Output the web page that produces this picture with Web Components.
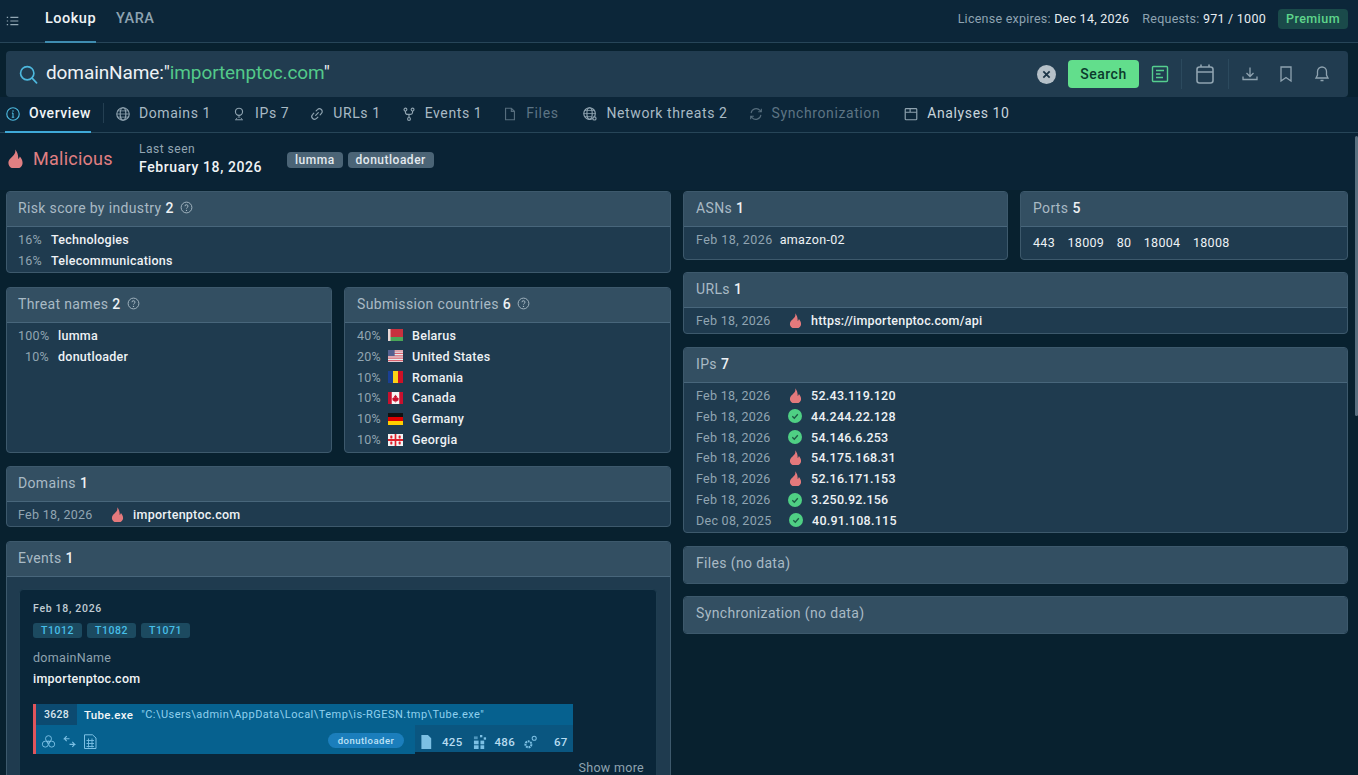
<!DOCTYPE html>
<html lang="en">
<head>
<meta charset="utf-8">
<title>Lookup</title>
<style>
html,body{margin:0;padding:0;height:775px;overflow:hidden;background:#08212f}
body{font-family:Roboto,"Liberation Sans",sans-serif;color:#e8eef2;font-size:13px}
</style>
</head>
<body>
<app-page></app-page>
<script>
const ICONS={
 list:'<path d="M6 5h9M6 9h9M6 13h9M2 5h1.500M2 9h1.500M2 13h1.500" stroke-width="1.300"/>',
 search:'<circle cx="8.300" cy="8.300" r="6"/><path d="M12.700 12.700l4 4.300" stroke-linecap="round"/>',
 info:'<circle cx="9" cy="9" r="7"/><path d="M9 8v4.500M7.600 12.700h2.800M7.800 8h1.200" stroke-width="1.200"/><circle cx="9" cy="5.600" r=".9" fill="currentColor" stroke="none"/>',
 globe:'<circle cx="9" cy="9" r="7"/><ellipse cx="9" cy="9" rx="3.200" ry="7"/><path d="M2 9h14M3 5.500h12M3 12.500h12" stroke-width=".9"/>',
 pin:'<circle cx="9" cy="6.500" r="4"/><path d="M9 10.500v3M5 15.500h8M7 13.500l-2 2M11 13.500l2 2" stroke-width="1.100"/>',
 link:'<path d="M7.500 10.500l3-3M8 5.500l1.500-1.500a3 3 0 014.500 4.300L12.500 10M10 12.500L8.500 14A3 3 0 014 9.700L5.500 8" stroke-linecap="round"/>',
 fork:'<circle cx="5" cy="4" r="1.600"/><circle cx="13" cy="4" r="1.600"/><circle cx="9" cy="14.500" r="1.600"/><path d="M5 5.600V7a2.500 2.500 0 002.500 2.500h3A2.500 2.500 0 0013 7V5.600M9 9.500v3.400"/>',
 file:'<path d="M4 2.500h6.500L14 6v9.500H4zM10.500 2.500V6H14"/>',
 threat:'<circle cx="8.500" cy="8.500" r="6.500"/><ellipse cx="8.500" cy="8.500" rx="3" ry="6.500"/><path d="M2 8.500h13M3 5h11M3 12h8" stroke-width=".9"/><circle cx="14" cy="14" r="1.800" fill="#0c2639"/>',
 sync:'<path d="M3.500 8A5.700 5.700 0 0113.500 5L15 6.500M14.500 10A5.700 5.700 0 014.500 13L3 11.500M15 3v3.500h-3.500M3 15v-3.500h3.500" stroke-width="1.200"/>',
 layout:'<rect x="2.500" y="3" width="13" height="12.500" rx="1"/><path d="M2.500 7h13M8 7V3"/>',
 report:'<rect x="2.500" y="2.500" width="15" height="15" rx="1"/><path d="M6 6.500h8M6 10h4.500M6 13.500h7"/>',
 cal:'<rect x="3" y="4" width="16" height="16" rx="2.500"/><path d="M3 9h16M7 1.500V4M15 1.500V4"/>',
 down:'<path d="M9 2.500v8.500M5.500 8l3.500 3.500L12.500 8M2 11.500v3h14v-3"/>',
 mark:'<path d="M4 2h10v14l-5-3.500L4 16z"/>',
 bell:'<path d="M9 2a4.500 4.500 0 00-4.500 4.500V10L3 13h12l-1.500-3V6.500A4.500 4.500 0 009 2zM7.500 15.500h3"/>',
 help:'<circle cx="7" cy="7" r="5.800"/><path d="M5.400 5.600a1.600 1.600 0 113 .8c-.5.7-1.400.9-1.400 1.800"/><circle cx="7" cy="10.100" r=".7" fill="currentColor" stroke="none"/>',
 flame:'<path fill="currentColor" stroke="none" d="M7.200.3c.6 2.600-.5 3.900-1.800 5.300C4 7.100 1.900 8.500 1.900 11c0 2.700 2.500 4.700 5.600 4.700s5.600-2 5.600-4.700c0-2.100-1.100-3.800-2.200-5.100-.2.9-.6 1.600-1.300 2 .3-2.900-.6-5.600-2.400-7.600z"/>',
 ok:'<circle cx="7" cy="7" r="7" fill="currentColor" stroke="none"/><path d="M4.300 7.200l2 2 3.500-4" stroke="#1d5a44" stroke-width="1.300"/>',
 clear:'<circle cx="9" cy="9" r="9" fill="currentColor" stroke="none"/><path d="M6 6l6 6M12 6l-6 6" stroke="#1c3547" stroke-width="1.700"/>',
 bio:'<circle cx="8" cy="5" r="3.200"/><circle cx="4.600" cy="10.800" r="3.200"/><circle cx="11.400" cy="10.800" r="3.200"/><circle cx="8" cy="8.800" r="1.300"/>',
 swap:'<path d="M8 5H2.500L5 2.200M2.500 5L5 7.500M8 11h5.500L11 8.500M13.500 11L11 13.800" stroke-width="1.200"/>',
 sheet:'<path d="M1.500 .8h8L13 4v10.500H1.500z"/><path d="M3.500 6.500h7.500M3.500 9.500h7.500M3.500 12.500h7.500M5.500 4.500v9M9 4.500v9" stroke-width=".9"/>',
 doc:'<path fill="currentColor" stroke="none" d="M1.500 0h7L12 3.500V15H1.500z"/>',
 tree:'<g fill="currentColor" stroke="none"><rect x="1" y="6" width="5" height="4"/><rect x="8" y="6" width="4" height="4"/><rect x="1" y="11" width="5" height="4"/><rect x="8" y="11" width="4" height="4"/><rect x="1" y="1.500" width="4" height="3" opacity=".6"/><rect x="7.500" y="0" width="2.500" height="2.500"/><rect x="11.500" y="2.500" width="2.500" height="2.500"/></g>',
 gears:'<circle cx="5.800" cy="10" r="3.200" stroke-dasharray="2 .8" stroke-width="2.200"/><circle cx="12" cy="3.500" r="2.200" stroke-width="1.100"/>'
};
function el(name,html){
  customElements.define(name,class extends HTMLElement{
    constructor(){super();this.attachShadow({mode:'open'}).innerHTML=typeof html==='function'?html(this):html;}
  });
}
customElements.define('x-icon',class extends HTMLElement{
  connectedCallback(){
    if(this.shadowRoot)return;
    const s=+(this.getAttribute('size')||16),vb=this.getAttribute('vb')||18,n=this.getAttribute('name');
    const sw=this.getAttribute('sw')||1.3;
    this.attachShadow({mode:'open'}).innerHTML=`<style>:host{display:inline-flex;flex:none;width:${s}px;height:${s}px}svg{width:100%;height:100%;display:block}</style><svg viewBox="0 0 ${vb} ${vb}" fill="none" stroke="currentColor" stroke-width="${sw}">${ICONS[n]}</svg>`;
  }
});
const FLAGS={
 by:'<rect width="18" height="12" fill="#c8313e"/><rect y="8" width="18" height="4" fill="#4aa657"/><rect width="3" height="12" fill="#e9d8d6"/>',
 us:'<rect width="18" height="12" fill="#e8eef2"/><path d="M0 1h18M0 3.400h18M0 5.800h18M0 8.200h18M0 10.600h18" stroke="#d9636f" stroke-width="1.200"/><rect width="8" height="6" fill="#54608f"/>',
 ro:'<rect width="6" height="12" fill="#1a3f94"/><rect x="6" width="6" height="12" fill="#fcd116"/><rect x="12" width="6" height="12" fill="#ce1126"/>',
 ca:'<rect width="18" height="12" fill="#f4f4f4"/><rect width="4.500" height="12" fill="#c8102e"/><rect x="13.500" width="4.500" height="12" fill="#c8102e"/><path d="M9 2.500l.8 1.600 1-.4-.4 2.200 1.300-.6.400.9 1-.1-.6 1.500.4.400-2.400 1.500-1.300-.1v1.500h-.4V9.400l-1.300.1-2.400-1.500.4-.4-.6-1.500 1 .1.400-.9 1.300.6-.4-2.200 1 .4z" fill="#c8102e"/>',
 de:'<rect width="18" height="4" fill="#111"/><rect y="4" width="18" height="4" fill="#d00"/><rect y="8" width="18" height="4" fill="#ffce00"/>',
 ge:'<rect width="18" height="12" fill="#f4f4f4"/><path d="M8 0h2v12H8zM0 5h18v2H0z" fill="#e0202c"/><path d="M3 1.500h2v3H3zM2.500 2.500h3v1h-3zM13 1.500h2v3h-2zM12.500 2.500h3v1h-3zM3 7.500h2v3H3zM2.500 8.500h3v1h-3zM13 7.500h2v3h-2zM12.500 8.500h3v1h-3z" fill="#e0202c"/>'
};
customElements.define('x-flag',class extends HTMLElement{
  connectedCallback(){
    if(this.shadowRoot)return;
    this.attachShadow({mode:'open'}).innerHTML=`<style>:host{display:inline-flex;flex:none;width:15px;height:12px}svg{width:100%;height:100%;display:block}</style><svg viewBox="0 0 18 12" preserveAspectRatio="none">${FLAGS[this.getAttribute('code')]}</svg>`;
  }
});

el('top-tab',`<style>
:host{display:flex;align-items:center;height:42px;box-sizing:border-box;padding-bottom:6px;font-size:14.500px;font-weight:500;letter-spacing:.5px;color:#8ea3b1;position:relative}
:host([active]){color:#f0f4f6}
:host([active])::after{content:"";position:absolute;left:0;right:0;bottom:-1px;height:2px;background:#3f8db0}
</style><slot></slot>`);

el('top-bar',`<style>
:host{display:flex;align-items:center;height:42px;padding:0 10px 0 5px;background:#0c2639;border-bottom:1px solid #274558;box-sizing:content-box}
.menu{color:#93a8b5;display:flex;margin-right:24px;margin-top:0}
.tabs{display:flex;gap:20px}
.right{margin-left:auto;display:flex;align-items:center;font-size:12.500px;letter-spacing:.25px;color:#8ea3b1;padding-bottom:5px}
b{font-weight:400;color:#e8eef2}
.sp{margin-left:13px}
.prem{margin-left:12px;background:#1a4a4a;color:#5fd68c;font-weight:500;border-radius:4px;padding:3px 8px;height:14px;line-height:14px;letter-spacing:.45px}
</style>
<span class="menu"><x-icon name="list" size="16"></x-icon></span>
<div class="tabs"><top-tab active>Lookup</top-tab><top-tab>YARA</top-tab></div>
<div class="right"><span>License expires: <b>Dec 14, 2026</b></span><span class="sp">Requests: <b>971 / 1000</b></span><span class="prem">Premium</span></div>`);

el('search-bar',`<style>
:host{display:flex;align-items:center;height:46px;margin:8px 10px 0 6px;background:#213c50;border-radius:4px;padding:0 17px 0 12px;box-sizing:border-box}
.q{margin-left:8px;font-size:19px;color:#eef2f5;letter-spacing:-.1px;line-height:44px;padding-bottom:2px}
.q i{font-style:normal;color:#53c98a}
.ic{color:#8fa3b0;display:flex}
.btn{background:#62de8c;color:#0b3a2c;font-weight:500;font-size:14px;letter-spacing:.5px;border-radius:4px;height:28px;width:71px;display:flex;align-items:center;justify-content:center;margin-left:12px;margin-top:-1px}
.div{width:1px;height:30px;background:#2c4a5e;margin:0}
</style>
<span class="ic" style="color:#4db8de"><x-icon name="search" size="20" sw="1.500"></x-icon></span>
<span class="q">domainName:"<i>importenptoc.com</i>"</span>
<span class="ic" style="margin-left:auto;color:#b5c0c8"><x-icon name="clear" size="19"></x-icon></span>
<span class="btn">Search</span>
<span class="ic" style="color:#55cf8f;margin-left:11px"><x-icon name="report" vb="20" size="20" sw="1.400"></x-icon></span>
<span class="div" style="margin-left:11px"></span>
<span class="ic" style="margin-left:12px"><x-icon name="cal" vb="22" size="22" sw="1.600"></x-icon></span>
<span class="div" style="margin-left:12px"></span>
<span class="ic" style="margin-left:12px"><x-icon name="down" size="18"></x-icon></span>
<span class="ic" style="margin-left:18px"><x-icon name="mark" size="18"></x-icon></span>
<span class="ic" style="margin-left:18px"><x-icon name="bell" size="18"></x-icon></span>`);

customElements.define('nav-tab',class extends HTMLElement{
  connectedCallback(){
    if(this.shadowRoot)return;
    this.attachShadow({mode:'open'}).innerHTML=`<style>
:host{display:flex;align-items:center;height:35px;box-sizing:border-box;padding-bottom:4px;gap:8px;font-size:14px;letter-spacing:.6px;color:#a9bac5;position:relative;white-space:nowrap}
:host([active]){color:#f0f4f6;font-weight:500;letter-spacing:.55px}
:host([disabled]){color:#5d7484}
:host([strong]){color:#c8d4dc}
:host([active])::after{content:"";position:absolute;left:0;right:0;bottom:-1px;height:2px;background:#3fa9d8}
x-icon{color:#8fa3b0;margin-top:2px}
:host([active]) x-icon{color:#4db8de}
:host([disabled]) x-icon{color:#566d7d}
</style><x-icon name="${this.getAttribute('icon')}" size="16"></x-icon><span><slot></slot></span>`;
  }
});

el('nav-bar',`<style>
:host{display:flex;height:35px;border-bottom:1px solid #274558;background:#0c2639;padding-left:5px}
.d{width:1px;height:20px;background:#243f52;margin:6px 11px 0 12px}
.g{display:flex;gap:20px}
</style>
<nav-tab active icon="info">Overview</nav-tab><span class="d"></span>
<div class="g">
<nav-tab icon="globe">Domains 1</nav-tab><nav-tab icon="pin">IPs 7</nav-tab><nav-tab icon="link">URLs 1</nav-tab><nav-tab icon="fork">Events 1</nav-tab><nav-tab disabled icon="file">Files</nav-tab><nav-tab icon="threat" style="margin-left:4px">Network threats 2</nav-tab><nav-tab disabled icon="sync">Synchronization</nav-tab><nav-tab strong icon="layout" style="margin-left:3px">Analyses 10</nav-tab>
</div>`);

el('tag-pill',`<style>:host{display:inline-flex;align-items:center;height:16px;padding:0 8px;background:#4b6476;border-radius:4px;font-size:12px;font-weight:500;letter-spacing:.5px;color:#e4eaee}</style><slot></slot>`);

el('summary-bar',`<style>
:host{display:flex;align-items:center;height:57px;padding:0 0 6px 6px;background:#0a2335;box-sizing:border-box}
.m{display:flex;align-items:center;gap:8px;color:#e07f82;font-size:18px;letter-spacing:.25px;width:133px;margin-top:-1px}
.m x-icon{margin-top:1px}
.s{display:flex;flex-direction:column;width:148px;margin-top:2px}
.s small{font-size:12px;color:#93a6b3;letter-spacing:.5px;line-height:15px}
.s b{font-size:14px;font-weight:500;letter-spacing:.6px;line-height:20px;color:#f0f4f6}
.t{display:flex;gap:5px;margin-top:2px}
</style>
<div class="m"><x-icon name="flame" vb="15" size="19"></x-icon>Malicious</div>
<div class="s"><small>Last seen</small><b>February 18, 2026</b></div>
<div class="t"><tag-pill>lumma</tag-pill><tag-pill>donutloader</tag-pill></div>`);

customElements.define('x-panel',class extends HTMLElement{
  connectedCallback(){
    if(this.shadowRoot)return;
    const t=this.getAttribute('title'),c=this.getAttribute('count');
    this.attachShadow({mode:'open'}).innerHTML=`<style>
:host{display:flex;flex-direction:column;box-sizing:border-box;border:1px solid #3d596c;border-radius:4px;background:#1f3b4f;overflow:hidden;min-width:0}
.h{display:flex;align-items:center;height:35px;flex:none;box-sizing:border-box;padding:0 var(--hp,11px) 3px;background:#334f62;font-size:14px;letter-spacing:.35px;color:#a9bac5;border-bottom:1px solid #48667b}
:host([nodata]) .h{border-bottom:0;height:36px;padding-bottom:4px}
b{font-weight:500;color:#eef2f5;margin-left:4px}
x-icon{margin-left:6px;color:#a9bac5}
.b{flex:1;padding:var(--pad,2px var(--hp,11px) 1px)}
:host([nodata]) .b{display:none}
</style><div class="h">${t}${c?`<b>${c}</b>`:''}${this.hasAttribute('help')?'<x-icon name="help" vb="14" size="13" sw="1"></x-icon>':''}</div><div class="b"><slot></slot></div>`;
  }
});

customElements.define('data-row',class extends HTMLElement{
  connectedCallback(){
    if(this.shadowRoot)return;
    const st=this.getAttribute('status');
    this.attachShadow({mode:'open'}).innerHTML=`<style>
:host{display:flex;align-items:center;height:20.850px;font-size:12.500px;letter-spacing:.25px;white-space:nowrap}
.l{color:#91a5b2;flex:none;text-align:var(--lab-align,left);width:var(--lab-w,auto);margin-right:var(--lab-gap,8px);letter-spacing:var(--lab-ls,.28px)}
.i{width:15px;display:flex;justify-content:center;margin-right:8.500px;margin-left:9px;flex:none}
.flame{color:#e4797c}.ok{color:#4fd084}
.v{color:#eef2f5;font-weight:500;font-size:12.500px}
:host([light]) .v{font-weight:400;letter-spacing:.35px}
</style><span class="l">${this.getAttribute('label')}</span>${st?`<span class="i ${st}"><x-icon name="${st}" vb="${st==='ok'?14:15}" size="${st==='ok'?14:15}"></x-icon></span>`:''}<slot name="flag"></slot><span class="v"><slot></slot></span>`;
  }
});

el('tech-chip',`<style>:host{display:inline-flex;align-items:center;justify-content:center;width:49px;height:15px;background:#1c4a60;border-radius:3px;font-size:10.500px;font-weight:500;letter-spacing:.5px;color:#46bfe8}</style><slot></slot>`);

el('process-card',`<style>
:host{display:block;width:540px;margin-top:17px;font-size:11.500px;letter-spacing:.3px;position:relative}
.bar{position:absolute;left:0;top:0;bottom:0;width:3px;background:#e0555c;z-index:1}
.top{display:flex;align-items:center;height:21px;background:#06618f;padding-left:3px}
.pid{background:#0c4a70;height:100%;width:41px;display:flex;align-items:center;justify-content:center;color:#d8e6ee;font-size:10.500px;font-weight:500;letter-spacing:.3px}
.nm{color:#f2f6f8;font-weight:500;margin-left:7px;font-size:11.500px}
.cmd{color:#8fd0ee;margin-left:8px;font-size:11px;letter-spacing:.47px}
.bot{display:flex;height:29px}
.lft{width:382px;background:#06618f;height:29px;display:flex;align-items:center;padding:3px 0 0 8px;box-sizing:border-box;color:#7cc0e4;gap:6px}
.pill{margin-left:auto;margin-right:11px;background:#1b7ebc;color:#bfe2f5;width:76px;height:15px;border-radius:8px;font-size:9.500px;display:flex;align-items:center;justify-content:center;letter-spacing:.5px;font-weight:500;margin-top:-1px}
.st{flex:1;height:27px;background:#0a5680;display:flex;align-items:center;color:#b7dcf0;font-size:11.500px;font-weight:500;box-sizing:border-box;padding:6px 0 0 5px}
.st x-icon{color:#7cc0e4}
.st span{margin-left:8px}
</style>
<div class="bar"></div>
<div class="top"><span class="pid">3628</span><span class="nm">Tube.exe</span><span class="cmd">"C:\\Users\\admin\\AppData\\Local\\Temp\\is-RGESN.tmp\\Tube.exe"</span></div>
<div class="bot"><div class="lft"><x-icon name="bio" vb="16" size="15" sw="1"></x-icon><x-icon name="swap" vb="16" size="15" sw="1"></x-icon><x-icon name="sheet" vb="15" size="15" sw="1"></x-icon><span class="pill">donutloader</span></div>
<div class="st"><x-icon name="doc" vb="15" size="14"></x-icon><span>425</span><x-icon name="tree" vb="15" size="14" style="margin-left:10px"></x-icon><span>486</span><x-icon name="gears" vb="15" size="14" style="margin-left:8px"></x-icon><span style="margin-left:17px">67</span></div></div>`);

el('event-card',`<style>
:host{display:block;background:#0a2639;border:1px solid #1f3d50;border-radius:4px;padding:12px 12px 0 13px;height:200px;box-sizing:border-box}
.d{font-size:10.500px;font-weight:500;color:#c0ccd4;letter-spacing:.7px;line-height:14px}
.c{display:flex;gap:5px;margin-top:7px}
.k{font-size:12.500px;color:#8fa3b0;letter-spacing:.3px;margin-top:12px;line-height:16px}
.v{font-size:12.500px;font-weight:500;color:#f0f4f6;letter-spacing:.25px;margin-top:5px;line-height:16px}
.more{text-align:right;font-size:12.500px;color:#8fa3b0;letter-spacing:.3px;margin-top:6px;line-height:15px}
</style>
<div class="d">Feb 18, 2026</div>
<div class="c"><tech-chip>T1012</tech-chip><tech-chip>T1082</tech-chip><tech-chip>T1071</tech-chip></div>
<div class="k">domainName</div><div class="v">importenptoc.com</div>
<process-card></process-card>
<div class="more">Show more</div>`);

el('app-page',`<style>
:host{display:block;height:775px;position:relative;overflow:hidden}
.grid{display:grid;grid-template-columns:665px 665px;column-gap:12px;padding:1px 0 0 6px;align-items:start}
.col{display:flex;flex-direction:column;gap:13px}
.right{gap:12px;--hp:12px}
.two{display:grid;gap:13px}
.scroll{position:absolute;right:0;top:136px;width:3px;height:280px;background:#5a7080;border-radius:2px}
.events{--pad:12px 13px 0 12px}
.ports{display:flex;gap:12.500px;font-size:12.500px;letter-spacing:.3px;color:#eef2f5;height:26px;align-items:center;font-weight:400}
.ft{--lab-w:31px;--lab-align:right;--lab-gap:9px}
.sub{--hp:12px}
.fl{--lab-gap:7px}
.fl x-flag{margin-right:9px}
.ft2{--lab-gap:9px}
</style>
<top-bar></top-bar>
<search-bar></search-bar>
<nav-bar></nav-bar>
<summary-bar></summary-bar>
<div class="grid">
 <div class="col">
  <x-panel title="Risk score by industry" count="2" help style="height:82px">
   <data-row label="16%" class="ft2">Technologies</data-row>
   <data-row label="16%" class="ft2">Telecommunications</data-row>
  </x-panel>
  <div class="two" style="grid-template-columns:326px 327px;column-gap:12px;height:166px;margin-top:1px">
   <x-panel title="Threat names" count="2" help>
    <data-row class="ft" label="100%">lumma</data-row>
    <data-row class="ft" label="10%">donutloader</data-row>
   </x-panel>
   <x-panel class="sub" title="Submission countries" count="6" help>
    <data-row class="fl" label="40%"><x-flag slot="flag" code="by"></x-flag>Belarus</data-row>
    <data-row class="fl" label="20%"><x-flag slot="flag" code="us"></x-flag>United States</data-row>
    <data-row class="fl" label="10%"><x-flag slot="flag" code="ro"></x-flag>Romania</data-row>
    <data-row class="fl" label="10%"><x-flag slot="flag" code="ca"></x-flag>Canada</data-row>
    <data-row class="fl" label="10%"><x-flag slot="flag" code="de"></x-flag>Germany</data-row>
    <data-row class="fl" label="10%"><x-flag slot="flag" code="ge"></x-flag>Georgia</data-row>
   </x-panel>
  </div>
  <x-panel title="Domains" count="1" style="height:61px"><data-row label="Feb 18, 2026" status="flame">importenptoc.com</data-row></x-panel>
  <x-panel title="Events" count="1" class="events" style="height:260px;margin-top:1px"><event-card></event-card></x-panel>
 </div>
 <div class="col right">
  <div class="two" style="grid-template-columns:325px 328px;column-gap:12px">
   <x-panel title="ASNs" count="1" style="height:69px"><data-row label="Feb 18, 2026" light style="--lab-ls:.45px;--lab-gap:7px">amazon-02</data-row></x-panel>
   <x-panel title="Ports" count="5" style="height:69px"><div class="ports"><span>443</span><span>18009</span><span>80</span><span>18004</span><span>18008</span></div></x-panel>
  </div>
  <x-panel title="URLs" count="1" style="height:62px"><data-row label="Feb 18, 2026" status="flame" style="letter-spacing:.2px">https://importenptoc.com/api</data-row></x-panel>
  <x-panel title="IPs" count="7" style="height:186px;margin-top:1px">
   <data-row label="Feb 18, 2026" status="flame">52.43.119.120</data-row>
   <data-row label="Feb 18, 2026" status="ok">44.244.22.128</data-row>
   <data-row label="Feb 18, 2026" status="ok">54.146.6.253</data-row>
   <data-row label="Feb 18, 2026" status="flame">54.175.168.31</data-row>
   <data-row label="Feb 18, 2026" status="flame">52.16.171.153</data-row>
   <data-row label="Feb 18, 2026" status="ok">3.250.92.156</data-row>
   <data-row label="Dec 08, 2025" status="ok">40.91.108.115</data-row>
  </x-panel>
  <x-panel title="Files (no data)" nodata style="height:38px;margin-top:1px"></x-panel>
  <x-panel title="Synchronization (no data)" nodata style="height:38px"></x-panel>
 </div>
</div>
<div class="scroll"></div>`);
</script>
</body>
</html>
